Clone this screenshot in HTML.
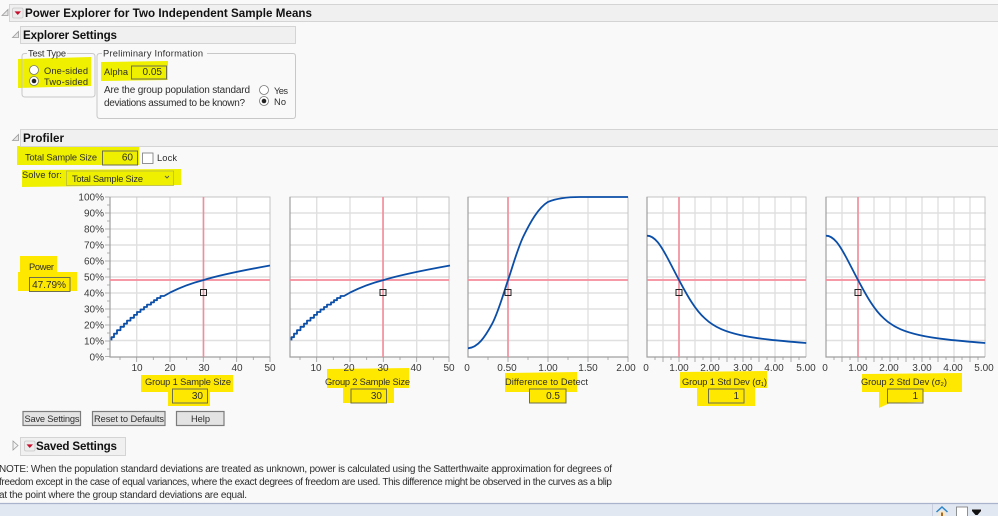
<!DOCTYPE html>
<html><head><meta charset="utf-8"><style>
html,body{margin:0;padding:0;background:#f9f9f9;width:998px;height:516px;overflow:hidden}
svg{display:block;filter:blur(.3px)}
text{font-family:"Liberation Sans",sans-serif;font-size:9.3px;fill:#2e2e2e}
.n{font-size:10px}
.b{font-weight:bold;font-size:11.6px;fill:#111}
.t{font-size:10px;fill:#3a3a3a;text-anchor:middle}
.y{font-size:10px;fill:#3a3a3a;text-anchor:end}
.r{text-anchor:end;font-size:10px}
.g{stroke:#e0e0e0;stroke-width:1.4;fill:none}
.h{fill:#f0f0f0;stroke:#d4d4d4}
.bx{fill:none;stroke:#6e6e50;stroke-width:1}
.gb{fill:none;stroke:#c8c8c8;stroke-width:1}
.rd{fill:#fff;stroke:#777;stroke-width:.8}
.btn{fill:#e3e3e3;stroke:#7c7c7c;stroke-width:1.2}
.c{fill:none;stroke:#0b4ea8;stroke-width:1.8;stroke-linejoin:round}
</style></head><body>
<svg width="998" height="516" viewBox="0 0 998 516" xmlns="http://www.w3.org/2000/svg">
<defs>
<g id="hg"><path class="g" d="M0 16H160M0 32H160M0 48H160M0 64H160M0 80H160M0 96H160M0 112H160M0 128H160M0 143.5H160"/></g>
<path id="cn" class="c" d="M1.5 143.4V140.2H4V136.7H7V133.2H10.5V129.8H14V126.7H17V123.6H20.5V120.8H24V117.9H27V115H30.5V112.5H34V110H37V107.6H41V105.4H44V103.2H47V101H50.5V99H54L60 95.6C70 90.5 80 86.5 93.3 83.1C110 78 135 73 160 68.5"/>
<path id="cs" class="c" d="M0 38.7C8 38.7 14 49 20 60C24 67.5 28 75.5 32 83C38 94 47 112 58 121.5C68 131 80 135 93 138C110 142 135 144 159.3 146"/>
<path id="mt" d="M0 0h6v6h-6z" fill="none" stroke="#222" stroke-width="1"/>
<g id="rb"><rect x="0" y="0" width="10.5" height="10" rx="1.5" fill="#ececec" stroke="#c8c8c8" stroke-width=".8"/><path d="M2 3.4H8.5L5.25 7z" fill="#c8102e"/></g>
</defs>

<g fill="#eef000">
<path d="M18 59L91 57V86L18 88z"/>
<path d="M101 62L168 61V80L101 81z"/>
<path d="M17 146L139 145V165L17 165z"/>
<path d="M22 170L181 169V185L22 187z"/>
</g>
<g fill="#ffe800">
<path d="M20 256H57V272H77V291H18V272H20z"/>
<path d="M141 375H233V392H210V406H168V392H141z"/>
<path d="M327 369L409 368V388H394V403H343V388H327z"/>
<path d="M505 373L577 372V392H566V403H529V392H505z"/>
<path d="M680 372L767 371V388H755V406H697V388H680z"/>
<path d="M862 374L962 373V392H923V402L890 403L879 408V392H862z"/>
</g>

<rect class="h" x="9.5" y="4.5" width="990" height="17"/>
<rect class="h" x="20.5" y="26.5" width="275" height="17"/>
<rect class="h" x="20.5" y="129.5" width="980" height="17"/>
<rect class="h" x="20.5" y="437.5" width="105" height="18"/>

<path d="M2 15.5L8 9.5V15.5z" fill="#e6e6e6" stroke="#9a9a9a" stroke-width=".8"/>
<path d="M12.5 37.5L18.5 31.5V37.5z" fill="#e6e6e6" stroke="#9a9a9a" stroke-width=".8"/>
<path d="M12.5 140.5L18.5 134.5V140.5z" fill="#e6e6e6" stroke="#9a9a9a" stroke-width=".8"/>
<path d="M13 441L18 445.5L13 450z" fill="#f2f2f2" stroke="#9a9a9a" stroke-width=".8"/>
<use href="#rb" x="12.5" y="8"/>
<use href="#rb" x="24.5" y="441"/>

<text class="b" x="25" y="17" textLength="287">Power Explorer for Two Independent Sample Means</text>
<text class="b" x="23" y="39" textLength="94">Explorer Settings</text>
<text class="b" x="23" y="142" textLength="41">Profiler</text>
<text class="b" x="36" y="450" textLength="81">Saved Settings</text>

<path class="gb" d="M67 53.5H92Q95 53.5 95 56.5V94Q95 97 92 97H25Q22 97 22 94V56.5Q22 53.5 25 53.5H27"/>
<path class="gb" d="M207 53.5H293Q295.5 53.5 295.5 56.5V115.5Q295.5 118.500 293 118.5H100Q97 118.500 97 115.5V56.5Q97 53.5 100 53.5H102"/>
<text x="28" y="56.5" textLength="38">Test Type</text>
<text x="103" y="56.5" textLength="100">Preliminary Information</text>

<circle class="rd" cx="34" cy="70" r="4.5"/>
<circle class="rd" cx="34" cy="81" r="4.5"/><circle cx="34" cy="81" r="2.3" fill="#222"/>
<text x="44" y="74" textLength="44">One-sided</text>
<text x="44" y="85" textLength="44">Two-sided</text>

<text x="104" y="75" textLength="24">Alpha</text>
<rect class="bx" x="131.5" y="66" width="35" height="13"/>
<text class="r" x="162" y="75">0.05</text>
<text class="n" x="104" y="93" textLength="146">Are the group population standard</text>
<text class="n" x="104" y="106" textLength="141">deviations assumed to be known?</text>
<circle class="rd" cx="264" cy="90" r="4.5"/>
<circle class="rd" cx="264" cy="101" r="4.5"/><circle cx="264" cy="101" r="2.3" fill="#222"/>
<text x="274" y="94" textLength="14">Yes</text>
<text x="274" y="105" textLength="12">No</text>

<text x="25" y="160.5" textLength="72">Total Sample Size</text>
<rect class="bx" x="102.5" y="151" width="35" height="14"/>
<text class="r" x="133" y="160.5">60</text>
<rect x="142.5" y="153" width="10.5" height="10.5" fill="#fff" stroke="#777" stroke-width=".8"/>
<text x="157" y="161" textLength="20">Lock</text>
<text x="22" y="178" textLength="40">Solve for:</text>
<rect x="66.5" y="171" width="107" height="14.5" fill="none" stroke="#b8b840" stroke-width=".8"/>
<text x="72" y="182" textLength="71">Total Sample Size</text>
<path d="M165 176L167 178L169 176" fill="none" stroke="#555" stroke-width=".9"/>

<text class="y" x="104" y="200.5">100%</text>
<text class="y" x="104" y="216.5">90%</text>
<text class="y" x="104" y="232.5">80%</text>
<text class="y" x="104" y="248.5">70%</text>
<text class="y" x="104" y="264.5">60%</text>
<text class="y" x="104" y="280.5">50%</text>
<text class="y" x="104" y="296.5">40%</text>
<text class="y" x="104" y="312.5">30%</text>
<text class="y" x="104" y="328.5">20%</text>
<text class="y" x="104" y="344.5">10%</text>
<text class="y" x="104" y="360.5">0%</text>
<path d="M105 197H110M105 213H110M105 229H110M105 245H110M105 261H110M105 277H110M105 293H110M105 309H110M105 325H110M105 341H110M105 356.5H110M107 205H110M107 221H110M107 237H110M107 253H110M107 269H110M107 285H110M107 301H110M107 317H110M107 333H110M107 349H110" stroke="#999" stroke-width=".8"/>

<text x="29" y="270" textLength="25">Power</text>
<rect class="bx" x="29.5" y="277.5" width="40.5" height="14"/>
<text class="r" x="66" y="288">47.79%</text>

<g transform="translate(110,197)">
<rect width="160" height="160" fill="#fff"/>
<use href="#hg"/>
<path class="g" d="M26.7 0V160M60 0V160M93.3 0V160M126.7 0V160"/>
<path d="M0 160V0H160V160" fill="none" stroke="#c4c4c4"/>
<path d="M0 0V160H160" fill="none" stroke="#a0a0a0" stroke-width="1.2"/>
<path d="M93.5 0V160" stroke="#f48c9b" stroke-width="1.6"/>
<path d="M0 83H160" stroke="#f48c9b" stroke-width="1.8"/>
<use href="#cn"/>
<use href="#mt" x="90.5" y="92.5"/>
<path d="M10 160V163M26.7 160V165M43.3 160V163M60 160V165M76.7 160V163M93.3 160V165M110 160V163M126.7 160V165M143.3 160V163M160 160V165" stroke="#999" stroke-width=".8"/>
</g>
<text class="t" x="137" y="371">10</text><text class="t" x="170" y="371">20</text><text class="t" x="204" y="371">30</text><text class="t" x="237" y="371">40</text><text class="t" x="270" y="371">50</text>
<text x="145" y="385" textLength="86">Group 1 Sample Size</text>
<rect class="bx" x="172.5" y="389" width="35" height="14"/>
<text class="r" x="203" y="399">30</text>

<g transform="translate(290,197)">
<rect width="159" height="160" fill="#fff"/>
<use href="#hg"/>
<path class="g" d="M26.7 0V160M60 0V160M93.3 0V160M126.7 0V160"/>
<path d="M0 160V0H159V160" fill="none" stroke="#c4c4c4"/>
<path d="M0 0V160H159" fill="none" stroke="#a0a0a0" stroke-width="1.2"/>
<path d="M93 0V160" stroke="#f48c9b" stroke-width="1.6"/>
<path d="M0 83H159" stroke="#f48c9b" stroke-width="1.8"/>
<use href="#cn"/>
<use href="#mt" x="90" y="92.5"/>
<path d="M10 160V163M26.7 160V165M43.3 160V163M60 160V165M76.7 160V163M93.3 160V165M110 160V163M126.7 160V165M143.3 160V163M159 160V165" stroke="#999" stroke-width=".8"/>
</g>
<text class="t" x="316" y="371">10</text><text class="t" x="349" y="371">20</text><text class="t" x="383" y="371">30</text><text class="t" x="416" y="371">40</text><text class="t" x="449" y="371">50</text>
<text x="325" y="385" textLength="85">Group 2 Sample Size</text>
<rect class="bx" x="351" y="389" width="35.5" height="14"/>
<text class="r" x="382" y="399">30</text>

<g transform="translate(468,197)">
<rect width="160" height="160" fill="#fff"/>
<use href="#hg"/>
<path class="g" d="M40 0V160M80 0V160M120 0V160"/>
<path d="M0 160V0H160V160" fill="none" stroke="#c4c4c4"/>
<path d="M0 0V160H160" fill="none" stroke="#a0a0a0" stroke-width="1.2"/>
<path d="M40 0V160" stroke="#f48c9b" stroke-width="1.6"/>
<path d="M0 83H160" stroke="#f48c9b" stroke-width="1.8"/>
<path class="c" d="M0 151.3C10 150.5 17 140 24 127.1C30 116 35 98 40 83.2C45 68.5 50 50 56 38.1C62 26 70 11 80 4.9C88 1.5 98 0 112 0H160"/>
<use href="#mt" x="37" y="92.5"/>
<path d="M20 160V163M40 160V165M60 160V163M80 160V165M100 160V163M120 160V165M140 160V163M160 160V165" stroke="#999" stroke-width=".8"/>
</g>
<text class="t" x="467" y="371">0</text><text class="t" x="507" y="371">0.50</text><text class="t" x="548" y="371">1.00</text><text class="t" x="588" y="371">1.50</text><text class="t" x="626" y="371">2.00</text>
<text x="505" y="385" textLength="83">Difference to Detect</text>
<rect class="bx" x="529.5" y="389" width="36.5" height="14"/>
<text class="r" x="560" y="399">0.5</text>

<g transform="translate(647,197)">
<rect width="159" height="160" fill="#fff"/>
<use href="#hg"/>
<path class="g" d="M16 0V160M32 0V160M48 0V160M64 0V160M80 0V160M96 0V160M112 0V160M128 0V160M144 0V160"/>
<path d="M0 160V0H159V160" fill="none" stroke="#c4c4c4"/>
<path d="M0 0V160H159" fill="none" stroke="#a0a0a0" stroke-width="1.2"/>
<path d="M32 0V160" stroke="#f48c9b" stroke-width="1.6"/>
<path d="M0 83H159" stroke="#f48c9b" stroke-width="1.8"/>
<use href="#cs"/>
<use href="#mt" x="29" y="92.5"/>
<path d="M8 160V163M16 160V165M24 160V163M32 160V165M40 160V163M48 160V165M56 160V163M64 160V165M72 160V163M80 160V165M88 160V163M96 160V165M104 160V163M112 160V165M120 160V163M128 160V165M136 160V163M144 160V165M152 160V163" stroke="#999" stroke-width=".8"/>
</g>
<text class="t" x="646" y="371">0</text><text class="t" x="679" y="371">1.00</text><text class="t" x="710" y="371">2.00</text><text class="t" x="743" y="371">3.00</text><text class="t" x="774" y="371">4.00</text><text class="t" x="806" y="371">5.00</text>
<text x="682" y="385" textLength="85">Group 1 Std Dev (σ₁)</text>
<rect class="bx" x="708.5" y="389" width="35.5" height="14"/>
<text class="r" x="739" y="399">1</text>

<g transform="translate(826,197)">
<rect width="159" height="160" fill="#fff"/>
<use href="#hg"/>
<path class="g" d="M16 0V160M32 0V160M48 0V160M64 0V160M80 0V160M96 0V160M112 0V160M128 0V160M144 0V160"/>
<path d="M0 160V0H159V160" fill="none" stroke="#c4c4c4"/>
<path d="M0 0V160H159" fill="none" stroke="#a0a0a0" stroke-width="1.2"/>
<path d="M32 0V160" stroke="#f48c9b" stroke-width="1.6"/>
<path d="M0 83H159" stroke="#f48c9b" stroke-width="1.8"/>
<use href="#cs"/>
<use href="#mt" x="29" y="92.5"/>
<path d="M8 160V163M16 160V165M24 160V163M32 160V165M40 160V163M48 160V165M56 160V163M64 160V165M72 160V163M80 160V165M88 160V163M96 160V165M104 160V163M112 160V165M120 160V163M128 160V165M136 160V163M144 160V165M152 160V163" stroke="#999" stroke-width=".8"/>
</g>
<text class="t" x="825" y="371">0</text><text class="t" x="858" y="371">1.00</text><text class="t" x="889" y="371">2.00</text><text class="t" x="922" y="371">3.00</text><text class="t" x="953" y="371">4.00</text><text class="t" x="984" y="371">5.00</text>
<text x="861" y="385" textLength="86">Group 2 Std Dev (σ₂)</text>
<rect class="bx" x="887.5" y="389" width="35.5" height="14" stroke="#777"/>
<text class="r" x="918" y="399">1</text>

<rect class="btn" x="23" y="411.5" width="57.5" height="14"/>
<rect class="btn" x="92.5" y="411.5" width="72.5" height="14"/>
<rect class="btn" x="176.5" y="411.5" width="47.5" height="14"/>
<text x="24.5" y="422" textLength="55">Save Settings</text>
<text x="94" y="422" textLength="70">Reset to Defaults</text>
<text x="191" y="422" textLength="19">Help</text>

<text class="n" x="-1" y="472" textLength="613">NOTE: When the population standard deviations are treated as unknown, power is calculated using the Satterthwaite approximation for degrees of</text>
<text class="n" x="-1" y="485" textLength="613">freedom except in the case of equal variances, where the exact degrees of freedom are used. This difference might be observed in the curves as a blip</text>
<text class="n" x="-1" y="498" textLength="248">at the point where the group standard deviations are equal.</text>

<rect x="0" y="503.5" width="998" height="13" fill="#e2e8f2"/>
<path d="M0 503.5H998" stroke="#aab3cc" stroke-width="1.2"/>
<path d="M932.5 504V516" stroke="#c8cede"/>
<path d="M936.5 512L942 507L947.5 512" fill="none" stroke="#2d86c8" stroke-width="1.5"/>
<rect x="938.5" y="511" width="7" height="5" fill="#f4e9d0"/>
<rect x="941" y="512.5" width="2" height="3.5" fill="#a86a20"/>
<rect x="956.5" y="507" width="11" height="10" fill="#fff" stroke="#777" stroke-width=".8"/>
<path d="M972 509.5H981V511L977.5 515H975.5L972 511z" fill="#111"/>
</svg>
</body></html>
